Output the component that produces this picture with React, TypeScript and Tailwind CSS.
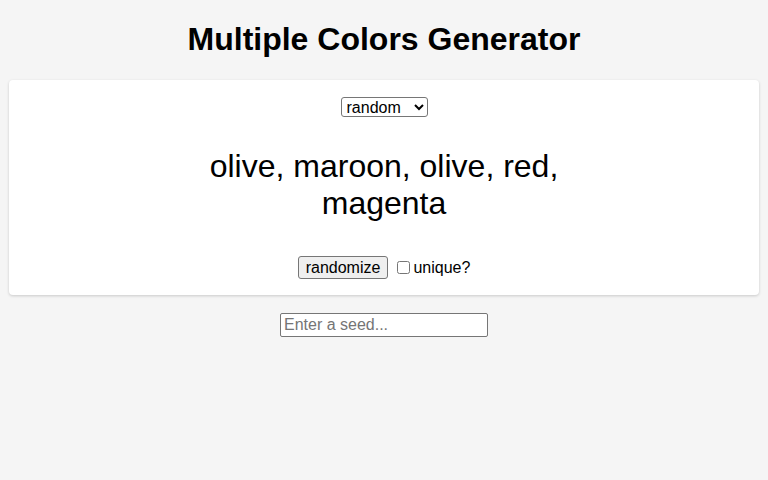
import { useState } from 'react';

const COLORS = ['olive', 'maroon', 'olive', 'red', 'magenta'];

export default function App() {
  const [mode, setMode] = useState('random');
  const [unique, setUnique] = useState(false);
  const [seed, setSeed] = useState('');

  return (
    <div className="min-h-screen bg-[#f5f5f5] text-black font-['Liberation_Sans',Arial,sans-serif] flex flex-col">
      <h1 className="text-[32px] leading-[37px] font-bold text-center mt-[21px] mb-[22px]">
        Multiple Colors Generator
      </h1>

      <div className="mx-[9px] bg-white rounded shadow-[0_1px_3px_rgba(0,0,0,0.18)] flex flex-col items-center pt-[17px] pb-[16px]">
        <select
          value={mode}
          onChange={(e) => setMode(e.target.value)}
          className="text-base leading-[18px] h-[20px] w-[87px] bg-white border border-[#767676] rounded-[3px] pl-[1px] text-black"
        >
          <option value="random">random</option>
          <option value="seeded">seeded</option>
        </select>

        <p className="mt-[31px] max-w-[400px] text-center text-[32px] leading-[37px]">
          {COLORS.join(', ')}
        </p>

        <div className="mt-[34px] flex items-center">
          <button className="text-base leading-[18px] h-[23px] px-[7px] bg-[#efefef] border border-[#767676] rounded-[3px] text-black">
            randomize
          </button>
          <label className="flex items-center text-base leading-[18px] ml-[5px]">
            <input
              type="checkbox"
              checked={unique}
              onChange={(e) => setUnique(e.target.checked)}
              className="w-[13px] h-[13px] ml-[4px] mr-[3px]"
            />
            unique?
          </label>
        </div>
      </div>

      <div className="flex justify-center mt-[18px]">
        <input
          value={seed}
          onChange={(e) => setSeed(e.target.value)}
          placeholder="Enter a seed..."
          className="w-[208px] h-[24px] text-base leading-[18px] px-[3px] bg-white border border-[#767676] rounded-[2px] placeholder:text-[#757575]"
        />
      </div>
    </div>
  );
}
